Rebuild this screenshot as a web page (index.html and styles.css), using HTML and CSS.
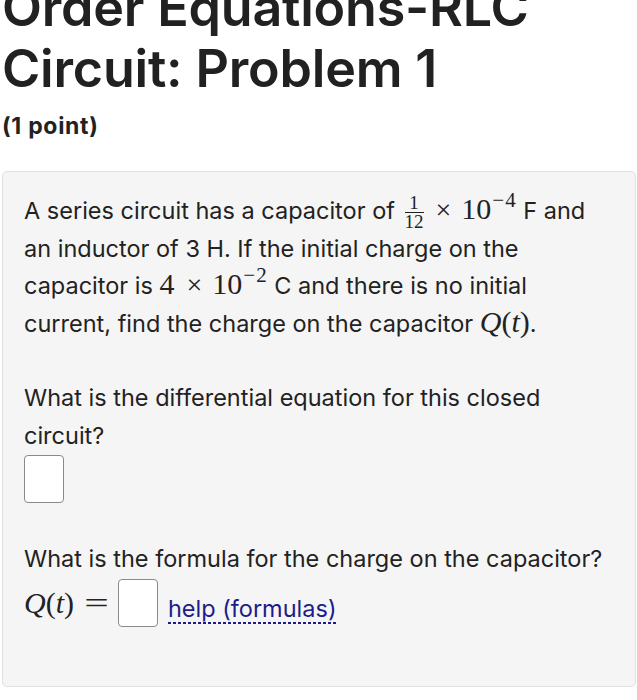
FILE: index.html
```html
<!DOCTYPE html>
<html>
<head>
  <meta name="viewport" content="width=device-width, initial-scale=1">
  <link rel="stylesheet" href="styles.css">
</head>
<body>
  <h1 class="title">Order Equations-RLC Circuit: Problem 1</h1>
  <div class="points">(1 point)</div>
  <div class="problem">
    <p>A series circuit has a capacitor of
      <span class="math"><span class="frac"><span class="num">1</span><span class="den">12</span></span><span class="op">×</span>10<sup>−4</sup></span> F and an inductor of 3 H. If the initial charge on the
      capacitor is <span class="math">4<span class="op">×</span>10<sup>−2</sup></span> C and there is no initial
      current, find the charge on the capacitor <span class="math"><i>Q</i>(<i>t</i>)</span>.</p>
    <p class="ask">What is the differential equation for this closed circuit?</p>
    <div class="answer"></div>
    <p class="ask">What is the formula for the charge on the capacitor?</p>
    <div class="formula">
      <span class="math"><i>Q</i>(<i>t</i>)<span class="eq">=</span></span>
      <span class="answer"></span>
      <a class="help" href="#">help (formulas)</a>
    </div>
  </div>
</body>
</html>
```

FILE: styles.css
```css
* { box-sizing: border-box; }
body { margin: 0; padding: 0 1px 0 2px; background: #fff; color: #222; font-family: Inter, "Noto Sans", Arial, sans-serif; overflow: hidden; }
.title { margin: -23px 0 0; font-size: 52px; line-height: 61px; font-weight: 600; color: #212121; letter-spacing: -0.2px; }
.points { margin-top: 12px; font-size: 23px; font-weight: 700; line-height: 30px; letter-spacing: 0.7px; }
.problem { margin-top: 30px; background: #f5f5f5; border: 1px solid #e0e0e0; border-radius: 5px; padding: 20px 21px 58px; font-size: 23.5px; line-height: 37.5px; }
.problem p { margin: 0 0 37px; }
.problem p.ask { margin-bottom: 0; }
.math { font-family: "Liberation Serif", "DejaVu Serif", serif; font-size: 30px; line-height: 0; white-space: nowrap; }
.math i { font-style: italic; }
.math sup { font-size: 21px; line-height: 0; vertical-align: 0; position: relative; top: -12px; margin-left: 1px; letter-spacing: 1px; }
.op { margin: 0 10px 0 12px; font-size: 28px; }
.frac { display: inline-block; vertical-align: -9px; font-size: 19px; line-height: 15px; margin: 0 0 0 3px; text-align: center; }
.frac .num { display: block; border-bottom: 1px solid #222; padding: 0 2px 2px; }
.frac .den { display: block; line-height: 14px; padding-top: 2px; }
.answer { display: block; width: 40px; height: 48px; background: #fff; border: 1px solid #8a8a8a; border-radius: 4px; margin-top: 1px; margin-bottom: 37px; }
.formula { display: flex; align-items: center; height: 50px; }
.formula .answer { display: inline-block; margin: 0 10px 0 0; }
.eq { display: inline-block; transform: scaleX(1.45); margin: 0 13px 0 14px; }
.help { color: #1d1d8a; text-decoration: none; line-height: 26px; align-self: flex-end; margin-bottom: 4px; padding-bottom: 2px;
  background: linear-gradient(to right, #1d1d8a 3px, transparent 3px) 0 100% / 5px 2px repeat-x; }
```
